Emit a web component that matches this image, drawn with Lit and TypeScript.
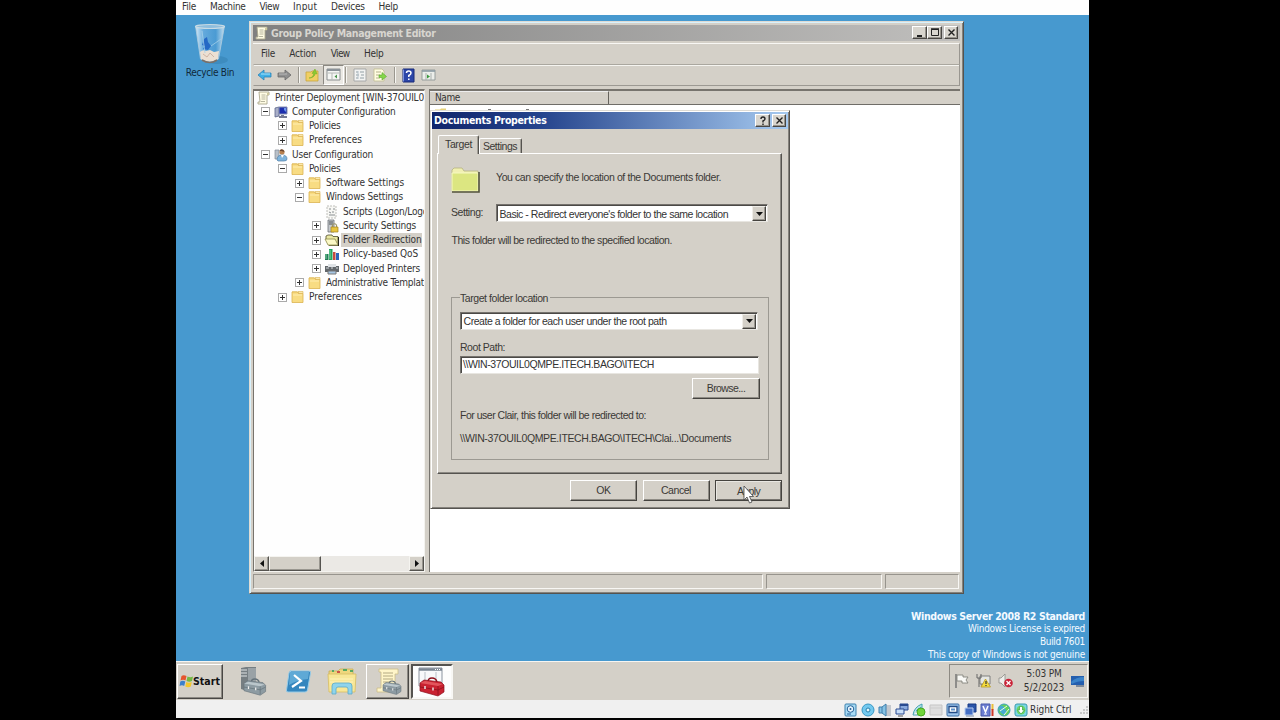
import { LitElement, html, css, svg, nothing } from "lit";
import { customElement } from "lit/decorators.js";

const UI = '"DejaVu Sans Condensed", "DejaVu Sans", sans-serif';
const CLASSIC = '"Liberation Sans", Arial, sans-serif';
const ctx = document.createElement("canvas").getContext("2d")!;

/** Text run whose tracking is derived from the width it should occupy. */
function run(text: string, width: number, kind: "ui" | "bold" | "classic" = "ui") {
  const font = kind === "ui" ? `10px ${UI}` : kind === "bold" ? `bold 10.5px ${UI}` : `10.5px ${CLASSIC}`;
  ctx.font = font;
  const spacing = (width - ctx.measureText(text).width) / text.length;
  return html`<span class="run ${kind}" style="letter-spacing:${spacing.toFixed(3)}px">${text}</span>`;
}

const icon = (w: number, h: number, body: unknown) =>
  html`<svg class="ic" width=${w} height=${h} viewBox="0 0 ${w} ${h}">${body}</svg>`;

const folder = svg`<path d="M2 3V1.500h5l1 1h5V12H2z" fill="#e3bd55"/><path d="M2 2h5.500l1 1.500H13V12.500H2z" fill="#f8dc83" stroke="#dcb250" stroke-width=".8"/><path d="M8 1.500h5v2H9z" fill="#fbe9ac" stroke="#dcb250" stroke-width=".6"/><path d="M3 5h9" stroke="#ffedb0"/>`;
const scroll = svg`<path d="M3 1h10v3h-2v9H2v-2h2z" fill="#fffce4" stroke="#aaa78c" stroke-width=".9"/><path d="M5.500 4h4M5.500 6h4M5.500 8h4M5 10.500h4" stroke="#a5a38d" stroke-width=".8"/><path d="M11 2h2v2h-2z" fill="#cfc99d"/>`;
const glyphs: Record<string, unknown> = {
  folder,
  scroll,
  computer: svg`<path d="M2 3l4-1v9l-4 1z" fill="#a8aec8" stroke="#596389" stroke-width=".8"/><path d="M6 2h8v7H6z" fill="#1d2fae" stroke="#858eb0"/><path d="M11 3h2v4l-2-2z" fill="#6d98ec"/><path d="M8 10h3v1h3v2H6v-2h2z" fill="#747a92"/>`,
  user: svg`<path d="M2 2h4v9H2z" fill="#b9c0c8" stroke="#818b96" stroke-width=".7"/><circle cx="9" cy="4" r="2.600" fill="#b9814f"/><path d="M4 12q0-5 5-5 5 0 5 4 0 2-3 2H5z" fill="#7fb4dc" stroke="#5583ab" stroke-width=".7"/><path d="M6.500 3q1-3 4-1l1 2-3-1z" fill="#6b4630"/><path d="M8 7l1 3 2-3" fill="#fff"/>`,
  script: svg`<path d="M3 1h9v12H3z" fill="#f7f7f4" stroke="#b1b1ac" stroke-width=".8" stroke-dasharray="2 1"/><path d="M5 4h2M9 4h2M5 7l2 1M8 7h2M5 10h6" stroke="#888d90"/>`,
  security: svg`<path d="M4 1h6v12H4z" fill="#c5c9cd" stroke="#6c7277" stroke-width=".8"/><path d="M5 3h4M5 5h4" stroke="#4e5458"/><path d="M8.500 8V6q2-2.500 4 0v2" fill="none" stroke="#9c966c" stroke-width="1.200"/><path d="M7 8h7v5H7z" fill="#e6c440" stroke="#a58522" stroke-width=".7"/>`,
  open: svg`<path d="M2 6V3l2-1h4l1 1.500h5v9H5z" fill="#e9e7a3" stroke="#4f4d2c" stroke-width=".8"/><path d="M1 6h10l3 6H4z" fill="#fbf9c6" stroke="#8d8a4b" stroke-width=".8"/><path d="M14.500 4v9" stroke="#262619"/>`,
  qos: svg`<path d="M1 7h3.500v6H1z" fill="#287a59"/><path d="M5 2h3.500v11H5z" fill="#23a45d"/><path d="M9 5h2.500v8H9z" fill="#c64b40"/><path d="M12 6h3v7h-3z" fill="#2b66ba"/><path d="M2 7v5M6 3v9" stroke="#7bd5a2"/>`,
  printer: svg`<path d="M1 4h14v6H1z" fill="#62676b"/><path d="M4 2h8v3H4z" fill="#dfe3e6"/><path d="M2 6h3M7 6h2M12 6h2" stroke="#d3d9dc"/><path d="M4 9h8v3H4z" fill="#a7c7e4" stroke="#777"/>`,
};

type Node = [level: number, box: string, glyph: string, label: string, width: number, selected?: boolean];
const tree: Node[] = [
  [0, "", "scroll", "Printer Deployment [WIN-37OUIL0", 149],
  [1, "-", "computer", "Computer Configuration", 103.5],
  [2, "+", "folder", "Policies", 31.5],
  [2, "+", "folder", "Preferences", 53],
  [1, "-", "user", "User Configuration", 81],
  [2, "-", "folder", "Policies", 31.5],
  [3, "+", "folder", "Software Settings", 78],
  [3, "-", "folder", "Windows Settings", 77],
  [4, "", "script", "Scripts (Logon/Logo", 85],
  [4, "+", "security", "Security Settings", 73],
  [4, "+", "open", "Folder Redirection", 78.5, true],
  [4, "+", "qos", "Policy-based QoS", 75],
  [4, "+", "printer", "Deployed Printers", 77],
  [3, "+", "folder", "Administrative Templat", 98],
  [2, "+", "folder", "Preferences", 53],
];

const tools = {
  back: svg`<path d="M1 7l6-5v3h7v4H7v3z" fill="#40b0e6" stroke="#2c83b8" stroke-width=".8"/><path d="M4 6h9" stroke="#a6e2fb"/>`,
  fwd: svg`<path d="M14 7L8 2v3H1v4h7v3z" fill="#909090" stroke="#686868" stroke-width=".8"/><path d="M2 6h8" stroke="#bbb"/>`,
  up: svg`<path d="M1 4h5l1-1h6v10H1z" fill="#f0cf63" stroke="#c8a440" stroke-width=".8"/><path d="M4 10q4 0 5-5l-2 .5L10 1l2 5-1.500-.5Q9 10 4 10z" fill="#8acb32" stroke="#6cab25" stroke-width=".5"/>`,
  pane: svg`<path d="M1 2h13v11H1z" fill="#f5f6f4" stroke="#8b8f90"/><path d="M1 3h13" stroke="#8b9298" stroke-width="2"/><path d="M2 6h11M6 6v7" stroke="#b5b9b6"/><path d="M11 7.500L8.500 9.500 11 11.500z" fill="#47944b"/>`,
  props: svg`<path d="M2 1h12v12H2z" fill="#f2f3f2" stroke="#a1a4a4" stroke-width=".9"/><path d="M4 4h2M8 4h4M4 7h3M9 7h3M4 10h2M8 10h4" stroke="#929fa5"/><path d="M6 3v8" stroke="#b7c3cb"/>`,
  exp: svg`<path d="M2 1h8l2 2v10H2z" fill="#fffde2" stroke="#c5c199" stroke-width=".9"/><path d="M4 4h5M4 7h4M4 10h4" stroke="#b5b18c"/><path d="M7 7h3V4.500L14.500 8.500 10 12v-2.500H7z" fill="#85d64b" stroke="#59a92f" stroke-width=".6"/>`,
  help: svg`<path d="M2 1h11v13H2z" fill="#2c46a8" stroke="#182a78"/><path d="M2.500 1.500v12" stroke="#7d93dd"/><path d="M5.500 5q0-2 2.200-2T10 5q0 1.500-2.200 2.500V9M7.800 10.500v1.500" fill="none" stroke="#fff" stroke-width="1.500"/>`,
  act: svg`<path d="M1 2h13v10H1z" fill="#eceeea" stroke="#8f9696" stroke-width=".9"/><path d="M1 3h13" stroke="#8b9aa3" stroke-width="1.600"/><path d="M5 5v7M10 5v7" stroke="#a9b0ad"/><path d="M6 6.500l3 2-3 2z" fill="#3b9a3e"/>`,
};

const recycle = svg`<defs><linearGradient id="bin" x2="1"><stop stop-color="#d5eaf7"/><stop offset=".28" stop-color="#63a9dc"/><stop offset=".7" stop-color="#4b9bd3"/><stop offset="1" stop-color="#c5dfef"/></linearGradient></defs>
<ellipse cx="24" cy="37" rx="11" ry="4" fill="#2f77a8" opacity=".4"/>
<path d="M2.500 3l5 33q8 6 18 0l6-33z" fill="url(#bin)" stroke="#b2cddd" stroke-width=".8"/>
<ellipse cx="17" cy="3.500" rx="14.500" ry="2" fill="#8dbddd" stroke="#c9dbe4" stroke-width="1.200"/>
<path d="M7 29q3-3 6-1l4-1 4 2 5-1-1 8q-8 5-17 0z" fill="#ece0d3"/><path d="M10 31l4 3 3-4 4 4" fill="none" stroke="#c6a999" stroke-width=".8"/>
<path d="M11 16l3-2 1 5 3 4-3 4-5-1 2-3-3-1z" fill="#2569c5"/><path d="M18 23l10-7M9 8l3 22" stroke="#a5cfe9" stroke-width=".8"/><path d="M9 37q8 5 15 0" fill="none" stroke="#7b7068" stroke-width="1.600"/>`;

const toolbox = (x: number, y: number, fill: string, dark: string, light: string, scale = 1) => svg`<g transform="translate(${x} ${y}) scale(${scale})">
<path d="M8 4q0-4 4-4t5 4" fill="none" stroke=${dark} stroke-width="1.400"/><path d="M0 5l4-3 17 2 3 3v7l-6 4L0 13z" fill=${fill} stroke=${dark} stroke-width=".7"/><path d="M0 5l18 3 5-2L5 3z" fill=${light}/><path d="M0 9l18 3 6-3M18 8v9" fill="none" stroke=${dark} stroke-width=".8"/><path d="M5 8v3M13 9.500v3" stroke="#eee" stroke-width="1.400"/></g>`;
const server = svg`<path d="M2 1l5-1h10v22l-9 2-6-2z" fill="#767e82"/><path d="M9 1h8v20H9z" fill="#9aa2a6"/><path d="M2 3h6M2 6h6M2 9h6" stroke="#e0e4e5" stroke-width="1.200"/>${toolbox(5, 12, "#8d9ba2", "#66737a", "#bac6cb", 0.9)}`;
const power = svg`<path d="M5 1h19q2 0 1.500 2l-3 17q-.5 2-2.500 2H3q-2 0-1.500-2L4 3q.3-2 2-2z" fill="#3486be" stroke="#97cce8"/><path d="M5 2h19l-1 7Q12 10 4 15z" fill="#70b8df" opacity=".7"/><path d="M9 5l7 6-9 6M14 17.500h6" fill="none" stroke="#fff" stroke-width="2.200"/>`;
const explorer = svg`<path d="M2 3h9l2-2h13v8H2z" fill="#efd77d" stroke="#c9ad53" stroke-width=".8"/><path d="M5 3h2M16 2h4M23 3h3" stroke="#58a961" stroke-width="2"/><path d="M10 4h3" stroke="#ce5446" stroke-width="2"/><path d="M1 6h28l-1 18H2z" fill="#f8e797" stroke="#d7bd62" stroke-width=".8"/><path d="M3 11h23M3 14h23" stroke="#fff3bb"/><path d="M5 26v-8q0-3 3-3h14q3 0 3 3v8h-4v-5q0-2-2-2h-8q-2 0-2 2v5z" fill="#8fd4ec" stroke="#5ba9c9" stroke-width=".8"/>`;
const gpm = svg`<path d="M4 1h19v5h-3v18H2v-4h4V4H4z" fill="#fff5c9" stroke="#cbbd89" stroke-width=".8"/><path d="M8 5h10M8 8h10M8 11h10M8 14h8M8 17h5" stroke="#aaa17b" stroke-width=".9"/>${toolbox(8, 13, "#8d9ba2", "#66737a", "#bcc8cd", 0.75)}`;
const mmc = svg`<path d="M2 1h23v18H2z" fill="#f8f9fb" stroke="#8b939e"/><path d="M2 2.500h23" stroke="#7a8592" stroke-width="2.500"/><path d="M18 2.500h5" stroke="#fff" stroke-dasharray="1 1"/><path d="M8 5v12M19 5v12" stroke="#bbc1c8"/>${toolbox(3, 11, "#c92130", "#8d101c", "#e2555c")}`;
const winflag = svg`<path d="M1.500 2q2-1.500 5 0L5.500 6.500Q3 5 .5 6.500z" fill="#e5552e"/><path d="M7.500 2.500q3 1.300 5.500 0L12 7q-2.500 1.300-5.500 0z" fill="#74b843"/><path d="M.3 7.500q2.500-1.500 5 0L4.200 12Q2 10.500-.5 12z" fill="#3c80cb"/><path d="M6.300 8q2.500 1.300 5.500 0l-1 4.500q-2.700 1.300-5.500 0z" fill="#f5c72c"/>`;

const trayFlag = svg`<path d="M2 1v14" stroke="#777" stroke-width="1.500"/><path d="M3 2h6v2h5L12 7l2 3H8V8H3z" fill="#f9f9f6" stroke="#85857e" stroke-width=".9"/>`;
const trayNet = svg`<path d="M4 3h10v8H4z" fill="#e6e7e3" stroke="#777" stroke-width=".9"/><path d="M1 1v4h4V1M3 5v9M6 13v-2" fill="none" stroke="#666"/><path d="M9.500 6l5 8H5z" fill="#f6dc3e" stroke="#b69b25" stroke-width=".8"/><path d="M10 8v3M10 12v1" stroke="#333" stroke-width="1.200"/>`;
const traySound = svg`<path d="M1 5h2l4-4v13l-4-4H1z" fill="#efefec" stroke="#8d8d88" stroke-width=".8"/><circle cx="10.500" cy="10" r="4.300" fill="#ca2439"/><path d="M8.500 8l4 4m0-4l-4 4" stroke="#fff" stroke-width="1.300"/>`;

const frame = (body: unknown) => svg`<rect x="1" y="1" width="11" height="12" rx="1" fill="#a7daf4" stroke="#3c80ae"/>${body}`;
const vmIcons = [
  frame(svg`<circle cx="6.500" cy="6" r="3.300" fill="#e9f6ff" stroke="#245f96"/><circle cx="6.500" cy="6" r="1" fill="#245f96"/><path d="M3 11h4" stroke="#245f96"/>`),
  svg`<circle cx="7" cy="7" r="6" fill="#73c9ef" stroke="#3797c5"/><circle cx="7" cy="7" r="2" fill="#e6f9ff" stroke="#267fac"/>`,
  svg`<path d="M8 2h5v11H8z" fill="#c4c8ce"/><path d="M1 4h3l4-3v12l-4-3H1z" fill="#86c3e5" stroke="#3e7fac"/><path d="M4 4v6" stroke="#3e7fac"/>`,
  svg`<path d="M5 1h8v6H5z" fill="#88a9de" stroke="#294b91"/><path d="M5 2h8" stroke="#294b91" stroke-width="2"/><path d="M1 6h8v5H1z" fill="#c8def8" stroke="#294b91"/><path d="M3 13h5" stroke="#555"/>`,
  svg`<path d="M1 12q1-8 9-11v4" fill="#b6e1ea" stroke="#45a3b2"/><path d="M1 12h5M4 8l5-4" stroke="#45a3b2"/><circle cx="9" cy="9" r="4" fill="#70d43b" stroke="#48a821"/>`,
  svg`<path d="M1 2h12v10H1z" fill="#dedede" stroke="#c5c5c5"/><path d="M1 5h12" stroke="#ccc"/>`,
  svg`<rect x="1" y="1" width="12" height="12" rx="1" fill="#9fc6ed" stroke="#396ca5"/><path d="M3 3.500h8v6H3z" fill="#fff" stroke="#224b86" stroke-width="1.300"/><path d="M5 5.500h4v2H5z" fill="#5d91cb"/>`,
  svg`<path d="M5 1h8v8H5z" fill="#2a55aa" stroke="#193b84"/><path d="M2 5h8v7H2z" fill="#456fc3" stroke="#b7cdf1"/><path d="M3 13h8" stroke="#7c8ca5"/>`,
  svg`<path d="M1 1h9v12H1z" fill="#6c7ed2" stroke="#4858a8"/><path d="M3 3l2.500 6L8 3" fill="none" stroke="#fff" stroke-width="1.500"/><path d="M4 11h3" stroke="#fff"/><path d="M12.500 1v6" stroke="#e9bf3a" stroke-width="2"/><path d="M12.500 6v7" stroke="#cf3829" stroke-width="2"/>`,
  svg`<circle cx="7" cy="7" r="6" fill="#64d05c" stroke="#3da2b8"/><path d="M2 4q3-3 5 0l3 5-3 3q-5-2-5-8z" fill="#46abd3"/><path d="M3 8l7-5M7 12l5-6" stroke="#e4ffe1"/>`,
  svg`<rect x="1" y="1" width="12" height="12" rx="2" fill="#79d6e5" stroke="#3b9aad"/><circle cx="7" cy="7" r="4.500" fill="#6bd463"/><path d="M5.500 3.500h3V7h2L7 11 3.500 7h2z" fill="#fff" stroke="#35a23b" stroke-width=".7"/>`,
];

const closeGlyph = svg`<path d="M2.500 2.500l6 6M8.500 2.500l-6 6" stroke="#222" stroke-width="1.400"/>`;
const menu = (items: [string, number][]) => items.map(([s, w]) => run(s, w));

@customElement("app-root")
export class AppRoot extends LitElement {
  static styles = css`
    :host { display: block; width: 1280px; height: 720px; background: #000; overflow: hidden; color: #333; }
    * { box-sizing: border-box; }
    .run { display: block; white-space: pre; flex: none; line-height: 14px; }
    .ui { font: 10px/14px "DejaVu Sans Condensed", "DejaVu Sans", sans-serif; }
    .bold { font: bold 10.5px/14px "DejaVu Sans Condensed", "DejaVu Sans", sans-serif; }
    .classic { font: 10.5px/14px "Liberation Sans", Arial, sans-serif; }
    .ic { display: block; flex: none; overflow: visible; }
    .screen { width: 913px; height: 718px; margin-left: 176px; display: flex; flex-direction: column; background: #f0f0f0; }
    .vmmenu { height: 15px; background: #fefefe; display: flex; gap: 14px; padding-left: 6px; flex: none; }
    .desktop { height: 646px; flex: none; background: #4799cf; position: relative; }
    .bin { width: 66px; padding-top: 8px; display: flex; flex-direction: column; align-items: center; gap: 3px; margin-left: 1px; color: #10283a; }
    .mark { position: absolute; right: 4px; bottom: -1px; color: #f4faff; display: flex; flex-direction: column; align-items: flex-end; }
    .mark .run { line-height: 12.9px; }
    .win { position: absolute; background: #d4d0c8; border: 1px solid; border-color: #dedbd4 #55534f #55534f #dedbd4; box-shadow: inset 1px 1px #fff, inset -1px -1px #85827c; }
    .main { left: 73px; top: 6px; width: 715px; height: 573px; padding: 3px; display: flex; flex-direction: column; box-shadow: inset 1px 1px #d8f1fc, inset -1px -1px #85827c; }
    .title { display: flex; align-items: center; flex: none; }
    .main .title { height: 16px; background: linear-gradient(90deg, #808080, #c0bfbd); color: #d8d5cf; padding: 0 2px 0 1px; }
    .main .title .run { margin-left: 3px; margin-top: -1px; }
    .caps { margin-left: auto; display: flex; gap: 0; }
    .main .caps { margin-top: -1px; }
    .cap { width: 15px; height: 13px; background: #d8d5ce; border: 1px solid; border-color: #fff #494744 #494744 #fff; box-shadow: inset -1px -1px #96938c; display: flex; align-items: center; justify-content: center; }
    .cap.x { margin-left: 2px; width: 14px; }
    .menubar { height: 21px; margin-top: 2px; border-top: 1px solid #f8f7f4; border-right: 1px solid #999690; display: flex; gap: 14.3px; align-items: center; padding: 0 0 0 8px; flex: none; }
    .tools { height: 22px; border: 1px solid; border-color: #aaa79f #999690 #9c9993 #d4d0c8; box-shadow: inset 0 1px #f5f4f0; display: flex; align-items: center; padding-left: 3px; flex: none; }
    .tools .ic { margin-right: 5px; }
    .bar { width: 2px; height: 16px; border-left: 1px solid #9a978f; border-right: 1px solid #f7f6f2; margin: 0 5px 0 1px; flex: none; }
    .bar.wide { margin-left: 2px; }
    .tools .press { border: 1px solid; border-color: #8b8882 #fff #fff #8b8882; background: #ebe9e4; padding: 1px 2px; margin: 0 0 0 -2px; height: 20px; width: 21px; flex: none; }
    .panes { height: 483px; margin-top: 3px; display: flex; gap: 4px; flex: none; }
    .tree { width: 172px; border: 1px solid #77746e; border-top-width: 2px; border-right-color: #f4f3ef; border-bottom-color: #f4f3ef; background: #fefefe; display: flex; flex-direction: column; overflow: hidden; }
    .nodes { flex: 1; overflow: hidden; }
    .nodes .node:first-child { height: 13.6px; }
    .node { height: 14.27px; display: flex; align-items: center; }
    .pm { width: 9px; height: 9px; margin-right: 3.5px; flex: none; }
    .label { margin-left: 1px; padding-left: 2px; height: 14px; }
    .label.sel { background: #d4d0c8; }
    .hscroll { height: 15px; display: flex; background: #ebe9e5; flex: none; }
    .sbtn { background: #d4d0c8; border: 1px solid; border-color: #f5f4f0 #55534f #55534f #f5f4f0; box-shadow: inset -1px -1px #99968f; width: 15px; display: flex; align-items: center; justify-content: center; }
    .thumb { width: 52px; }
    .hscroll .end { margin-left: auto; }
    .list { width: 531px; background: #fff; border: 1px solid #77746e; border-width: 2px 0 0 1px; }
    .head { height: 14px; background: #d4d0c8; border-bottom: 1px solid #6f6d68; display: flex; }
    .head .col { width: 179px; padding-left: 5px; border-right: 1px solid #65625c; border-top: 1px solid #eee; height: 13px; }
    .head .col .run { line-height: 12px; }
    .peek { margin: 2px 0 0 5px; }
    .status { display: flex; gap: 3px; margin-top: 2px; height: 15px; flex: none; }
    .status div { border: 1px solid; border-color: #97948d #f8f7f4 #f8f7f4 #97948d; }
    .s1 { width: 510px; } .s2 { width: 116px; } .s3 { width: 74px; }
    .dialog { left: 254px; top: 95px; width: 360px; height: 399px; padding: 1px; color: #3b3936; }
    .dialog .title { height: 17px; background: linear-gradient(90deg, #10256b, #24438c 30%, #a6caf0); color: #fff; padding: 0 2px 0 2px; }
    .dialog .title .run { margin-top: -1px; }
    .tabs { margin: 6px 0 0 6px; display: flex; align-items: flex-end; height: 18px; }
    .tab { border: 1px solid; border-color: #fff #55534f transparent #fff; border-bottom: 0; box-shadow: inset -1px 0 #a19e96; border-radius: 2px 2px 0 0; flex: none; }
    .t1 { width: 41px; height: 19px; padding: 1px 0 0 6px; background: #d4d0c8; margin-bottom: -1px; position: relative; }
    .t2 { width: 43px; height: 15px; padding: 0 0 0 3px; }
    .page { margin-left: 5px; width: 345px; height: 321px; border: 1px solid; border-color: #fff #55534f #55534f #fff; box-shadow: inset -1px -1px #8c8983; padding: 14px 12px 0 13px; display: flex; flex-direction: column; }
    .line { display: flex; flex: none; }
    .intro { height: 36px; gap: 16px; }
    .intro .run { margin-top: 2px; }
    .setting { height: 19px; }
    .setting .run { margin-top: 1px; }
    .setting .lab { width: 45px; flex: none; }
    .field { height: 18px; background: #fff; border: 1px solid; border-color: #75726d #e8e6e1 #e8e6e1 #75726d; box-shadow: inset 1px 1px #4b4946; display: flex; align-items: center; padding: 1px 1px 0 2.5px; color: #333; flex: none; }
    .setting .field { width: 272px; flex: none; }
    .setting .field .run { margin-top: 0; }
    .drop { margin-left: auto; width: 14px; height: 15px; background: #d4d0c8; border: 1px solid; border-color: #efede8 #45433f #45433f #efede8; box-shadow: inset -1px -1px #99968f; display: flex; align-items: center; justify-content: center; }
    .note { margin-top: 10px; height: 14px; margin-left: .5px; }
    .group { margin: 44px 0 0; width: 318px; height: 169px; flex: none; display: flex; flex-direction: column; padding: 0 9px; background: linear-gradient(#9c9992, #9c9992) 0 6px / 100% 1px no-repeat, linear-gradient(#9c9992, #9c9992) 0 6px / 1px 162px no-repeat, linear-gradient(#9c9992, #9c9992) 100% 6px / 1px 162px no-repeat, linear-gradient(#9c9992, #9c9992) 0 168px / 100% 1px no-repeat; }
    .legend { background: #d4d0c8; padding: 0 2px 0 0; align-self: flex-start; height: 14px; margin-top: -.5px; }
    .group .field { margin-top: 7px; width: 298px; }
    .group .root { margin-top: 10px; }
    .group .path { margin-top: 2px; width: 299px; padding: 0 0 1px 2px; }
    .btn { border: 1px solid; border-color: #fff #45433f #45433f #fff; box-shadow: inset -1px -1px #8f8c85; height: 21px; width: 67px; display: flex; align-items: center; justify-content: center; flex: none; padding-bottom: 2px; }
    .browse { align-self: flex-end; margin: 4px 0 0 0; width: 68px; padding-bottom: 1px; }
    .foruser { margin-top: 9px; } .target { margin-top: 9px; }
    .foot { margin: 6px 0 0 138px; display: flex; gap: 5.5px; }
    .btn.def { border-color: #45433f; box-shadow: inset 1px 1px #e9e7e2, inset -1px -1px #77746f; padding-bottom: 0; }
    .cursor { position: absolute; left: 567px; top: 471px; }
    .taskbar { height: 39px; background: #d4d0c8; border-top: 1px solid #f6f5f2; display: flex; flex: none; padding: 2px 1px 0; color: #333; }
    .start { width: 46px; height: 35px; border: 1px solid; border-color: #fff #494744 #494744 #fff; box-shadow: inset -1px -1px #8c8983; display: flex; align-items: center; padding: 0 0 1px 2px; color: #111; flex: none; }
    .quick { display: flex; margin-left: 9px; flex: none; }
    .quick div { width: 44px; height: 35px; display: flex; align-items: center; justify-content: center; flex: none; }
    .quick .task { width: 43px; border: 1px solid; border-color: #fff #494744 #494744 #fff; box-shadow: inset -1px -1px #8c8983; margin-left: 2px; }
    .quick .on { width: 42px; border: 2px solid; border-color: #55534f #f8f7f4 #f8f7f4 #55534f; background: #fdfdfd; margin-left: 2px; box-shadow: none; }
    .tray { margin-left: auto; width: 139px; height: 34px; border: 1px solid; border-color: #8d8a83 #f5f4f1 #f5f4f1 #8d8a83; display: flex; align-items: center; padding: 0 1px 0 4px; gap: 6px; }
    .clock { width: 42px; display: flex; flex-direction: column; align-items: center; margin-left: 3px; }
    .clock .run { line-height: 14.5px; }
    .vmstatus { height: 18px; display: flex; align-items: center; padding: 1px 1px 0 667.5px; gap: 3px; }
    .vmstatus .run { margin-left: -.5px; }
    .grip { margin-left: auto; }
  `;

  private node([level, box, glyph, label, width, selected]: Node) {
    return html`<div class="node" style="padding-left:${level ? level * 17 - 10.5 : 2}px">
      ${level
        ? html`<svg class="pm" viewBox="0 0 9 9">${box ? svg`<rect x=".5" y=".5" width="8" height="8" fill="#fff" stroke="#aaa"/><path d="M2 4.500h5" stroke="#333"/>${box === "+" ? svg`<path d="M4.500 2v5" stroke="#333"/>` : nothing}` : nothing}</svg>`
        : nothing}
      ${icon(16, 14, glyphs[glyph])}
      <div class="label ${selected ? "sel" : ""}">${run(label, width)}</div>
    </div>`;
  }

  private drop() {
    return html`<div class="drop">${icon(7, 4, svg`<path d="M0 0h7L3.500 4z" fill="#111"/>`)}</div>`;
  }

  private mainWindow() {
    return html`<section class="win main">
      <div class="title">
        ${icon(14, 14, scroll)} ${run("Group Policy Management Editor", 164.5, "bold")}
        <div class="caps">
          <div class="cap">${icon(12, 11, svg`<path d="M3 9h5" stroke="#222" stroke-width="2"/>`)}</div>
          <div class="cap">${icon(12, 11, svg`<path d="M2.500 2.500h7v6h-7z" fill="none" stroke="#222"/><path d="M2 2h8" stroke="#222" stroke-width="1.500"/>`)}</div>
          <div class="cap x">${icon(11, 11, closeGlyph)}</div>
        </div>
      </div>
      <div class="menubar">${menu([["File", 14], ["Action", 27], ["View", 19], ["Help", 19.5]])}</div>
      <div class="tools">
        ${icon(15, 14, tools.back)}${icon(15, 14, tools.fwd)}
        <div class="bar"></div>
        ${icon(15, 14, tools.up)}
        <div class="press">${icon(15, 15, tools.pane)}</div>
        <div class="bar"></div>
        ${icon(15, 14, tools.props)}${icon(15, 14, tools.exp)}
        <div class="bar wide"></div>
        ${icon(15, 15, tools.help)}${icon(15, 14, tools.act)}
      </div>
      <div class="panes">
        <div class="tree">
          <div class="nodes">${tree.map((n) => this.node(n))}</div>
          <div class="hscroll">
            <div class="sbtn">${icon(4, 7, svg`<path d="M4 0v7L0 3.500z" fill="#111"/>`)}</div>
            <div class="sbtn thumb"></div>
            <div class="sbtn end">${icon(4, 7, svg`<path d="M0 0v7l4-3.500z" fill="#111"/>`)}</div>
          </div>
        </div>
        <div class="list">
          <div class="head"><div class="col">${run("Name", 25)}</div></div>
          <div class="peek">${icon(100, 3, svg`<path d="M0 2.500h5l1-1h5v2H0z" fill="#e6d177"/><path d="M53 2.500h3M91 2.500h3" stroke="#777"/>`)}</div>
        </div>
      </div>
      <div class="status"><div class="s1"></div><div class="s2"></div><div class="s3"></div></div>
    </section>`;
  }

  private dialog() {
    return html`<section class="win dialog">
      <div class="title">
        ${run("Documents Properties", 112.5, "bold")}
        <div class="caps">
          <div class="cap">${icon(12, 12, svg`<path d="M4 4q0-2 2-2t2 2q0 1-2 2v1.500M6 8.500V10" fill="none" stroke="#222" stroke-width="1.400"/>`)}</div>
          <div class="cap x">${icon(11, 11, closeGlyph)}</div>
        </div>
      </div>
      <div class="tabs">
        <div class="tab t1">${run("Target", 27, "classic")}</div>
        <div class="tab t2">${run("Settings", 34, "classic")}</div>
      </div>
      <div class="page">
        <div class="line intro">
          ${icon(29, 25, svg`<path d="M1 4V2l2-2h8l2 3h14v20H1z" fill="#f1f0b2" stroke="#b5b37f" stroke-width=".8"/><path d="M1 5h26v18H1z" fill="#dce681" stroke="#f6f9c1"/><path d="M28 4v20H1" fill="none" stroke="#53533c" stroke-width="1.600"/>`)}
          ${run("You can specify the location of the Documents folder.", 225, "classic")}
        </div>
        <div class="line setting">
          <div class="lab">${run("Setting:", 32, "classic")}</div>
          <div class="field">${run("Basic - Redirect everyone's folder to the same location", 228.5, "classic")}${this.drop()}</div>
        </div>
        <div class="note">${run("This folder will be redirected to the specified location.", 220.5, "classic")}</div>
        <div class="group">
          <div class="legend">${run("Target folder location", 88, "classic")}</div>
          <div class="field">${run("Create a folder for each user under the root path", 203, "classic")}${this.drop()}</div>
          <div class="root">${run("Root Path:", 45, "classic")}</div>
          <div class="field path">${run("\\\\WIN-37OUIL0QMPE.ITECH.BAGO\\ITECH", 191, "classic")}</div>
          <div class="btn browse">${run("Browse...", 38.5, "classic")}</div>
          <div class="foruser">${run("For user Clair, this folder will be redirected to:", 186, "classic")}</div>
          <div class="target">${run("\\\\WIN-37OUIL0QMPE.ITECH.BAGO\\ITECH\\Clai...\\Documents", 271, "classic")}</div>
        </div>
      </div>
      <div class="foot">
        <div class="btn">${run("OK", 14.5, "classic")}</div>
        <div class="btn">${run("Cancel", 30, "classic")}</div>
        <div class="btn def">${run("Apply", 23, "classic")}</div>
      </div>
    </section>`;
  }

  render() {
    return html`<div class="screen">
      <nav class="vmmenu">${menu([["File", 14], ["Machine", 35.5], ["View", 19.5], ["Input", 24], ["Devices", 33.5], ["Help", 19.5]])}</nav>
      <main class="desktop">
        <div class="bin">${icon(34, 40, recycle)}${run("Recycle Bin", 48.5)}</div>
        <div class="mark">
          ${run("Windows Server 2008 R2 Standard", 174, "bold")}${run("Windows License is expired", 117)}${run("Build 7601", 45)}${run("This copy of Windows is not genuine", 157)}
        </div>
        ${this.mainWindow()}${this.dialog()}
        <div class="cursor">${icon(12, 19, svg`<path d="M1 0v14l3-3 2.500 6 2.500-1-2.500-5.500h4z" fill="#fff" stroke="#444" stroke-width=".8"/>`)}</div>
      </main>
      <footer class="taskbar">
        <div class="start">${icon(13, 14, winflag)}${run("Start", 27, "bold")}</div>
        <div class="quick">
          <div>${icon(30, 29, server)}</div>
          <div>${icon(27, 23, power)}</div>
          <div>${icon(30, 27, explorer)}</div>
          <div class="task">${icon(26, 27, gpm)}</div>
          <div class="task on">${icon(30, 29, mmc)}</div>
        </div>
        <div class="tray">
          ${icon(16, 16, trayFlag)}${icon(16, 16, trayNet)}${icon(16, 16, traySound)}
          <div class="clock">${run("5:03 PM", 35)}${run("5/2/2023", 40.5)}</div>
          ${icon(14, 14, svg`<path d="M0 2h13v9H0z" fill="#245eae"/><path d="M0 8q5-5 13-5v4Q6 7 1 10z" fill="#3c84ca"/><path d="M5 12h8" stroke="#65758b" stroke-width="1.500"/>`)}
        </div>
      </footer>
      <div class="vmstatus">
        ${vmIcons.map((i) => icon(14, 14, i))}${run("Right Ctrl", 41.5)}
        <div class="grip">${icon(8, 8, svg`<path d="M6 1h2M3 4h2M6 4h2M0 7h2M3 7h2M6 7h2" stroke="#bbb" stroke-width="1.500"/>`)}</div>
      </div>
    </div>`;
  }
}
